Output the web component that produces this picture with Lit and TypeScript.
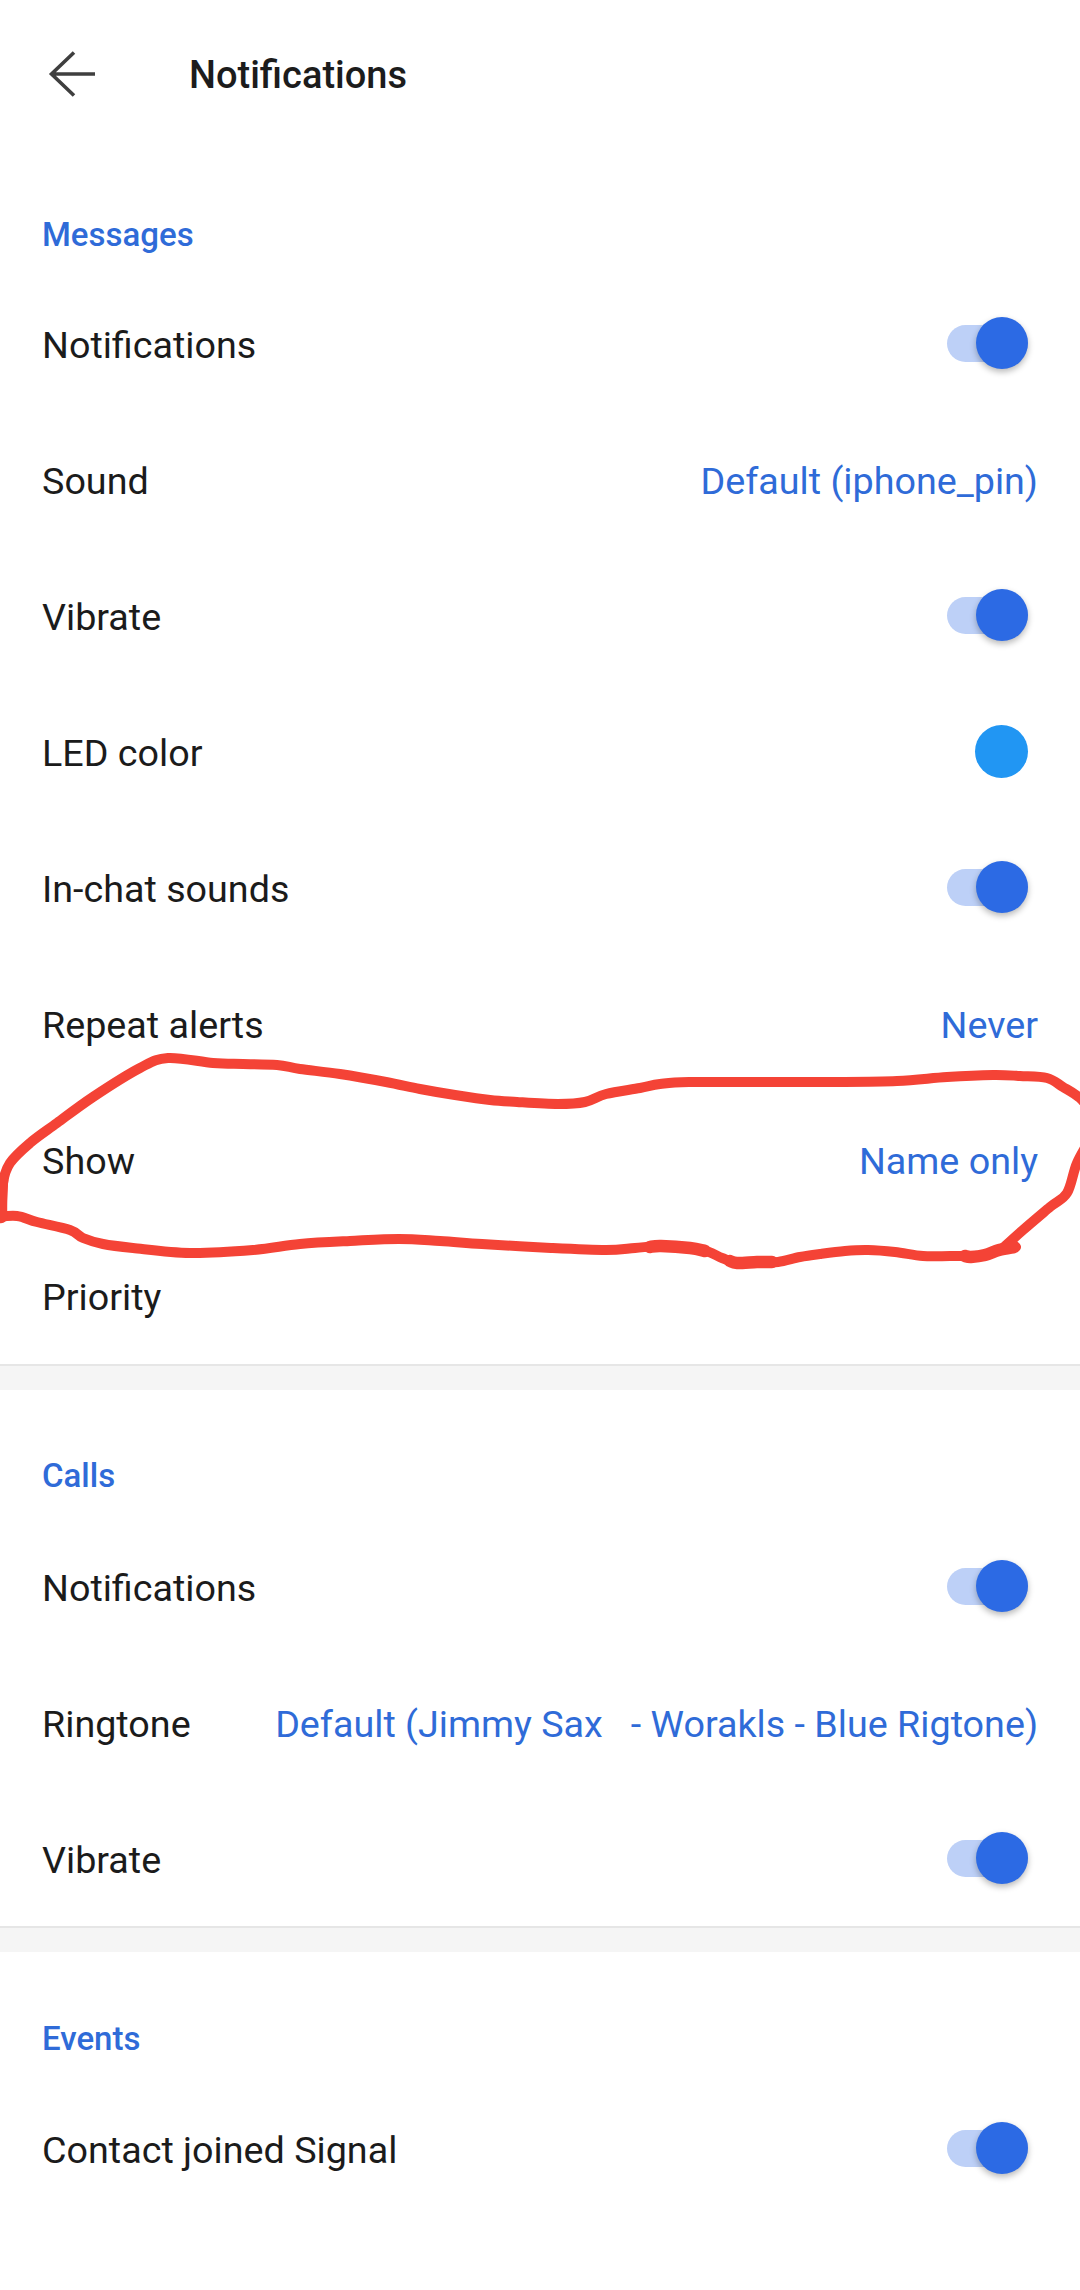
import { LitElement, html, css, svg } from "lit";
import { customElement } from "lit/decorators.js";

type Row = { label: string; value?: string; toggle?: boolean; dot?: boolean };
type Section = { title: string; rows: Row[]; cls: string };
type Pt = [number, number];

const SECTIONS: Section[] = [
  {
    title: "Messages",
    cls: "messages",
    rows: [
      { label: "Notifications", toggle: true },
      { label: "Sound", value: "Default (iphone_pin)" },
      { label: "Vibrate", toggle: true },
      { label: "LED color", dot: true },
      { label: "In-chat sounds", toggle: true },
      { label: "Repeat alerts", value: "Never" },
      { label: "Show", value: "Name only" },
      { label: "Priority" },
    ],
  },
  {
    title: "Calls",
    cls: "calls",
    rows: [
      { label: "Notifications", toggle: true },
      { label: "Ringtone", value: "Default (Jimmy Sax   - Worakls - Blue Rigtone)" },
      { label: "Vibrate", toggle: true },
    ],
  },
  {
    title: "Events",
    cls: "events",
    rows: [{ label: "Contact joined Signal", toggle: true }],
  },
];

/* Catmull-Rom through the hand-drawn points, so the ink stays smooth. */
function smooth(p: Pt[]): string {
  let d = `M${p[0][0]} ${p[0][1]}`;
  for (let i = 0; i < p.length - 1; i++) {
    const a = p[Math.max(i - 1, 0)];
    const b = p[i];
    const c = p[i + 1];
    const e = p[Math.min(i + 2, p.length - 1)];
    const c1x = b[0] + (c[0] - a[0]) / 6;
    const c1y = b[1] + (c[1] - a[1]) / 6;
    const c2x = c[0] - (e[0] - b[0]) / 6;
    const c2y = c[1] - (e[1] - b[1]) / 6;
    d += `C${c1x.toFixed(1)} ${c1y.toFixed(1)} ${c2x.toFixed(1)} ${c2y.toFixed(1)} ${c[0]} ${c[1]}`;
  }
  return d;
}

const TOP: Pt[] = [
  [1092, 1112], [1080, 1098], [1063, 1087], [1047, 1078], [1020, 1076], [993, 1075],
  [947, 1077], [897, 1081], [830, 1082], [780, 1082], [689, 1082], [660, 1084],
  [640, 1088], [606, 1094], [585, 1102], [558, 1104], [517, 1102], [490, 1100],
  [455, 1095], [420, 1089], [386, 1082], [340, 1074], [300, 1069], [277, 1065],
  [243, 1064], [213, 1063], [168, 1058], [140, 1068], [93, 1097], [57, 1123],
  [30, 1143], [10, 1163], [3, 1183], [2, 1217],
];
const BOTTOM: Pt[] = [
  [-4, 1217], [17, 1216], [37, 1222], [70, 1230], [83, 1238], [103, 1244], [133, 1248],
  [190, 1253], [253, 1250], [300, 1244], [350, 1241], [399, 1239], [440, 1241],
  [482, 1244], [551, 1248], [606, 1250], [635, 1248], [661, 1246], [690, 1248],
  [709, 1252], [722, 1258], [737, 1263], [757, 1262], [778, 1262], [800, 1257],
  [820, 1254], [845, 1251], [868, 1250], [895, 1252], [923, 1256], [950, 1256],
  [971, 1256], [985, 1255], [999, 1250], [1016, 1247],
];
const RIGHT: Pt[] = [
  [1003, 1248], [1023, 1230], [1050, 1207], [1067, 1193], [1077, 1163], [1092, 1136],
];
const THICK: Pt[][] = [
  [[650, 1247], [661, 1246], [690, 1248], [705, 1251]],
  [[730, 1261], [737, 1263], [757, 1262], [772, 1262]],
  [[965, 1256], [971, 1257], [985, 1255], [999, 1250], [1014, 1247]],
  [[2, 1180], [1, 1200], [1, 1217]],
];

@customElement("app-root")
export class AppRoot extends LitElement {
  static styles = css`
    :host {
      display: block;
      position: relative;
      width: 1080px;
      height: 2290px;
      overflow: hidden;
      background: #fff;
      font-family: Roboto, "Noto Sans", sans-serif;
      color: #1b1b1b;
    }
    .bar {
      display: flex;
      align-items: center;
      height: 150px;
      padding-left: 42px;
      box-sizing: border-box;
    }
    .back {
      width: 56px;
      height: 56px;
      flex: none;
    }
    .bar h1 {
      margin: 0 0 0 91px;
      font-size: 38px;
      font-weight: 500;
      line-height: 48px;
      color: #1c1c1c;
    }
    .section-title {
      padding: 59px 42px 16px;
      font-size: 33px;
      font-weight: 500;
      line-height: 52px;
      color: #2f6bd8;
    }
    .calls .section-title {
      padding: 60px 42px 18px;
    }
    .events .section-title {
      padding: 61px 42px 17px;
    }
    .row {
      display: flex;
      align-items: center;
      justify-content: space-between;
      height: 136px;
      padding: 0 42px;
      box-sizing: border-box;
    }
    .label,
    .value {
      padding-bottom: 1px;
      font-size: 37.7px;
      line-height: 48px;
      white-space: pre;
    }
    .value {
      color: #2f6bd8;
    }
    .switch {
      position: relative;
      width: 81px;
      height: 37px;
      margin: 0 10px 4px 0;
      border-radius: 19px;
      background: #bdd0f7;
    }
    .switch::after {
      content: "";
      position: absolute;
      right: 0;
      top: -8px;
      width: 52px;
      height: 52px;
      border-radius: 50%;
      background: #2c6ae4;
      box-shadow: 0 3px 6px rgba(0, 0, 0, 0.28);
    }
    .dot {
      width: 53px;
      height: 53px;
      margin: 0 10px 4px 0;
      border-radius: 50%;
      background: #2196f3;
    }
    .gap {
      height: 24px;
      margin-top: -2px;
      background: #f5f5f5;
      border-top: 2px solid #e6e6e6;
    }
    .messages .gap {
      margin-top: -1px;
    }
    .scribble {
      position: absolute;
      left: 0;
      top: 0;
      width: 1080px;
      height: 2290px;
      pointer-events: none;
    }
  `;

  private renderRow(r: Row) {
    return html`<div class="row">
      <span class="label">${r.label}</span>
      ${r.value ? html`<span class="value">${r.value}</span>` : null}
      ${r.toggle ? html`<span class="switch"></span>` : null}
      ${r.dot ? html`<span class="dot"></span>` : null}
    </div>`;
  }

  render() {
    return html`
      <div class="bar">
        <svg class="back" viewBox="0 0 56 56" fill="none" stroke="#3f3f3f" stroke-width="3.6">
          <path d="M53 27H9.5M32 5.5 9.5 27 32 48.5" />
        </svg>
        <h1>Notifications</h1>
      </div>
      ${SECTIONS.map(
        (s, i) => html`<section class=${s.cls}>
          <div class="section-title">${s.title}</div>
          ${s.rows.map((r) => this.renderRow(r))}
          ${i < SECTIONS.length - 1 ? html`<div class="gap"></div>` : null}
        </section>`
      )}
      <svg class="scribble" viewBox="0 0 1080 2290" fill="none" stroke="#f44336" stroke-linecap="round" stroke-linejoin="round">
        ${[TOP, BOTTOM, RIGHT].map((p) => svg`<path d=${smooth(p)} stroke-width="10" />`)}
        ${THICK.map((p) => svg`<path d=${smooth(p)} stroke-width="12.5" />`)}
      </svg>
    `;
  }
}
